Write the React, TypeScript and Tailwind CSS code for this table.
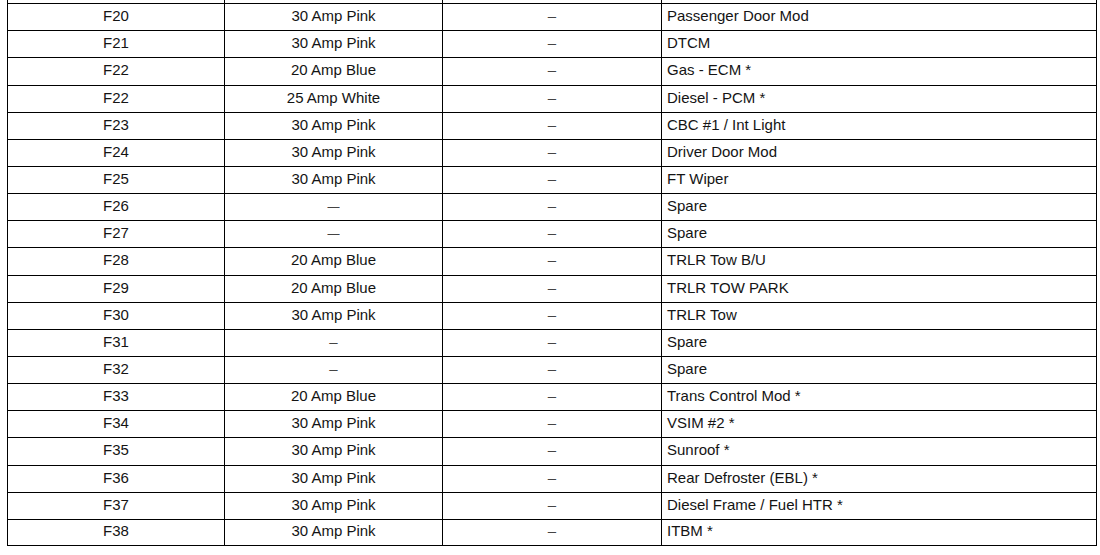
const rows: [string, string, string][] = [
  ["F20", "30 Amp Pink", "Passenger Door Mod"],
  ["F21", "30 Amp Pink", "DTCM"],
  ["F22", "20 Amp Blue", "Gas - ECM *"],
  ["F22", "25 Amp White", "Diesel - PCM *"],
  ["F23", "30 Amp Pink", "CBC #1 / Int Light"],
  ["F24", "30 Amp Pink", "Driver Door Mod"],
  ["F25", "30 Amp Pink", "FT Wiper"],
  ["F26", "—", "Spare"],
  ["F27", "—", "Spare"],
  ["F28", "20 Amp Blue", "TRLR Tow B/U"],
  ["F29", "20 Amp Blue", "TRLR TOW PARK"],
  ["F30", "30 Amp Pink", "TRLR Tow"],
  ["F31", "–", "Spare"],
  ["F32", "–", "Spare"],
  ["F33", "20 Amp Blue", "Trans Control Mod *"],
  ["F34", "30 Amp Pink", "VSIM #2 *"],
  ["F35", "30 Amp Pink", "Sunroof *"],
  ["F36", "30 Amp Pink", "Rear Defroster (EBL) *"],
  ["F37", "30 Amp Pink", "Diesel Frame / Fuel HTR *"],
  ["F38", "30 Amp Pink", "ITBM *"],
];

// rows that sit one pixel taller in the scan
const tall = new Set([2, 9, 16]);

export default function App() {
  return (
    <main className="min-h-screen bg-white pl-[7px] font-['Liberation_Sans',Arial,sans-serif] text-[15px] text-[#141414]">
      <div className="w-[1090px]">
        <div className="grid h-[3px] grid-cols-[217px_218px_219px_436px]">
          <div className="border-l border-black" />
          <div className="border-l border-black" />
          <div className="border-l border-black" />
          <div className="border-x border-black" />
        </div>
        {rows.map(([fuse, rating, circuit], i) => (
          <div
            key={i}
            className={`grid grid-cols-[217px_218px_219px_436px] border-t border-black ${
              tall.has(i) ? "h-[28px]" : "h-[27px]"
            } ${i === rows.length - 1 ? "border-b" : ""}`}
          >
            <div className="flex items-center justify-center border-l border-black pb-[2px]">{fuse}</div>
            <div
              className={`flex items-center justify-center border-l border-black pb-[2px] ${
                rating.length === 1 ? "text-[#444]" : ""
              }`}
            >
              {rating === "—" ? <span className="inline-block scale-x-[0.8]">—</span> : rating}
            </div>
            <div className="flex items-center justify-center border-l border-black pb-[2px] text-[#444]">–</div>
            <div className="flex items-center border-x border-black pb-[2px] pl-[5px]">{circuit}</div>
          </div>
        ))}
      </div>
    </main>
  );
}
